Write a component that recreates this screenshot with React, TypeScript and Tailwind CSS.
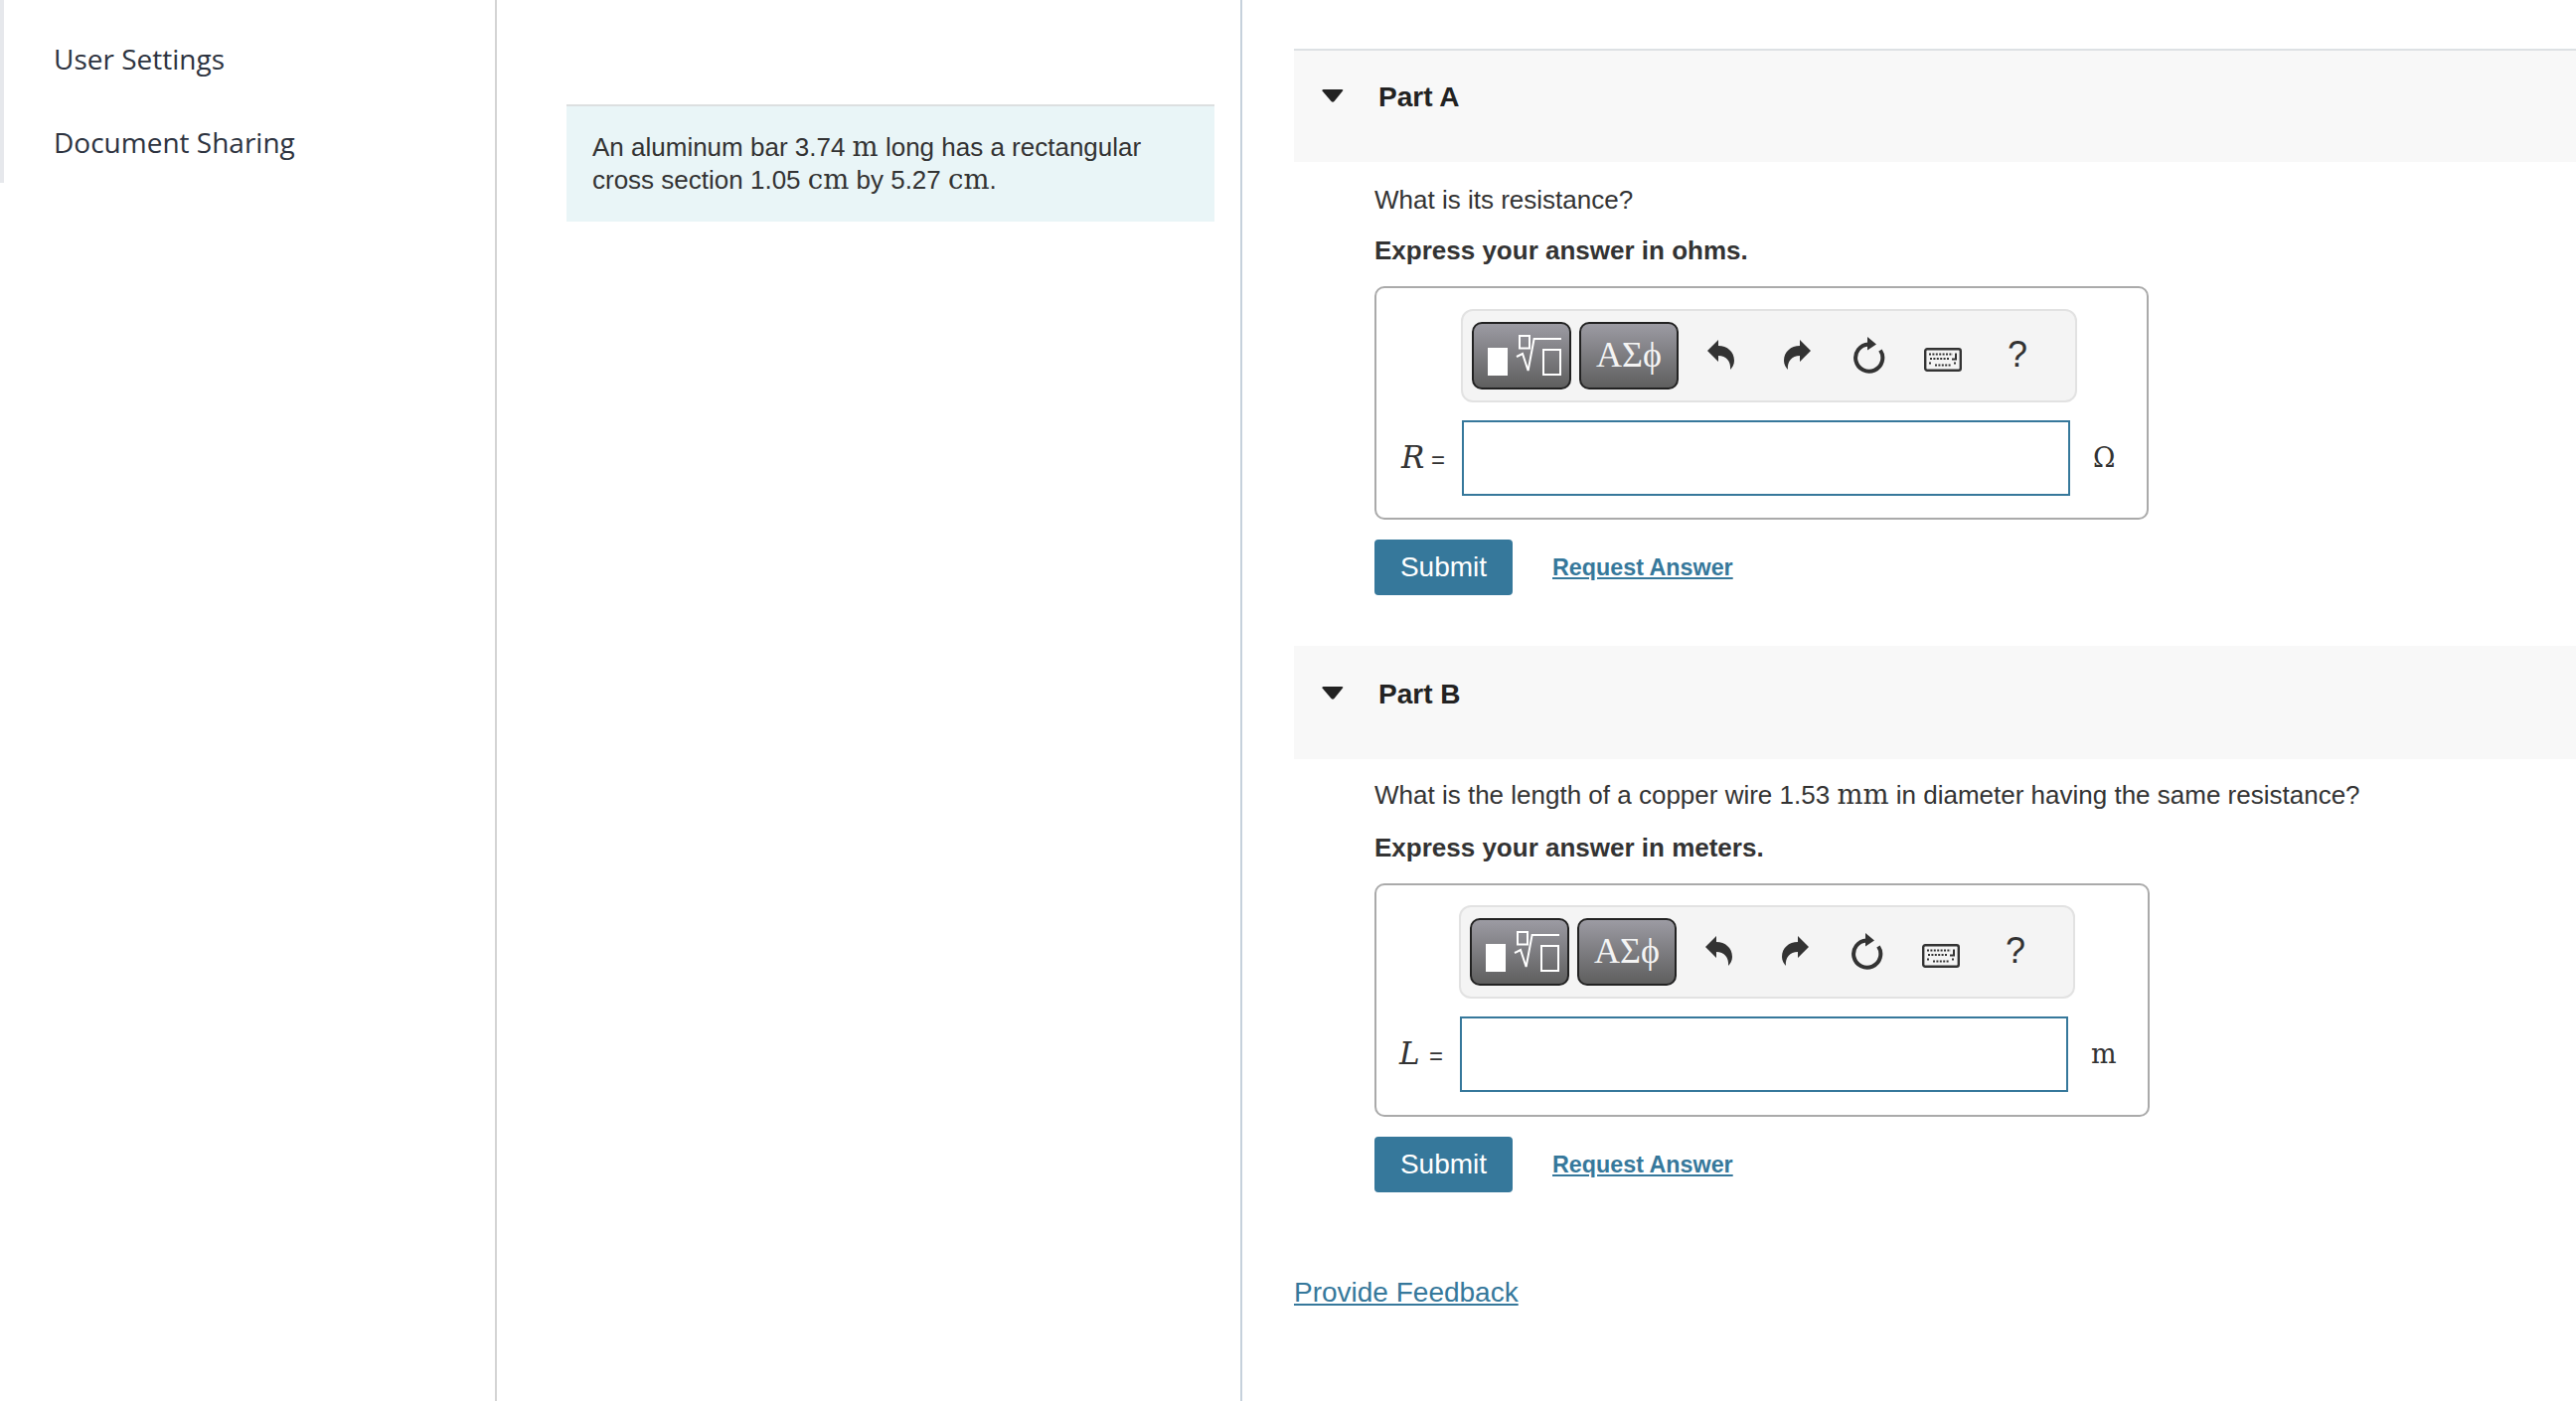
import React from 'react';

const serif = "font-['Liberation_Serif',serif]";

const Tex: React.FC<{ children: React.ReactNode }> = ({ children }) => (
  <span className="font-['DejaVu_Serif',serif] text-[27.5px] leading-none">{children}</span>
);

const TemplatesIcon = () => (
  <svg width="96" height="64" viewBox="0 0 96 64" fill="none" className="block">
    <rect x="14" y="24" width="20" height="28" fill="#fff" />
    <rect x="46" y="12" width="10" height="12.5" stroke="#fff" strokeWidth="2" />
    <path d="M43 33l6-3 5.6 17L60.6 15H88" stroke="#fff" strokeWidth="2" />
    <rect x="70" y="26" width="17" height="25" stroke="#fff" strokeWidth="2" />
  </svg>
);

const UndoIcon = () => (
  <svg width="27" height="30" viewBox="0 0 27 30" fill="#333" className="block">
    <path d="M0 11L11 0v6c9 0 16 6 16 15 0 4-2 7-4 9 1-8-4-14-12-14v6z" />
  </svg>
);

const RedoIcon = () => (
  <svg width="27" height="30" viewBox="0 0 27 30" fill="#333" className="block">
    <path d="M27 11L16 0v6C7 6 0 12 0 21c0 4 2 7 4 9-1-8 4-14 12-14v6z" />
  </svg>
);

const ResetIcon = () => (
  <svg width="32" height="37" viewBox="0 0 32 37" fill="none" className="block">
    <path d="M15 7.5A13.6 13.6 0 1 0 27 13.5" stroke="#333" strokeWidth="4" />
    <path d="M14 0l9 7.5-9 6z" fill="#333" />
  </svg>
);

const KeyboardIcon = () => (
  <svg width="38" height="24" viewBox="0 0 38 24" fill="none" className="block">
    <rect x="1.2" y="1.2" width="35.6" height="21.6" rx="2" stroke="#333" strokeWidth="2.4" />
    <path d="M5 6.5h24M6 11h20M5 15.5h3M11 17.5h16M30 15.5h3" stroke="#333" strokeWidth="2" strokeDasharray="2 1.4" />
    <path d="M32 5.5v6h-4" stroke="#333" strokeWidth="2" />
  </svg>
);

const Toolbar: React.FC<{ className: string }> = ({ className }) => (
  <div className={`flex h-[94px] w-[620px] items-center rounded-[12px] border-2 border-[#e2e2e2] bg-[#f4f4f4] pl-[9px] ${className}`}>
    <button className="flex h-[68px] w-[100px] items-center justify-center rounded-[10px] border-2 border-[#222] bg-gradient-to-b from-[#9c9ba3] to-[#5f5f5f]">
      <TemplatesIcon />
    </button>
    <button className={`ml-2 flex h-[68px] w-[100px] items-center justify-center rounded-[10px] border-2 border-[#222] bg-gradient-to-b from-[#9c9ba3] to-[#5f5f5f] pb-[3px] text-[36px] leading-none text-[#f4f4f4] ${serif}`}>
      ΑΣϕ
    </button>
    <span className="ml-[29px] mt-[-2px]"><UndoIcon /></span>
    <span className="ml-[50px] mt-[-2px]"><RedoIcon /></span>
    <span className="ml-[43px] mt-[-2px]"><ResetIcon /></span>
    <span className="ml-[39px] mt-[8px]"><KeyboardIcon /></span>
    <span className="ml-[46px] mt-[-3px] font-['Liberation_Sans',sans-serif] text-[36px] leading-none text-[#333]">?</span>
  </div>
);

interface PartProps {
  title: string;
  question: React.ReactNode;
  hint: string;
  symbol: string;
  unit: string;
  top?: boolean;
  toolbarShift: string;
  inputShift: string;
  boxWidth: string;
}

const Part: React.FC<PartProps> = ({ title, question, hint, symbol, unit, top, toolbarShift, inputShift, boxWidth }) => (
  <section>
    <div className={`flex h-[114px] bg-[#f8f8f8] pl-[28px] ${top ? 'border-t-2 border-[#dde1e4] pt-[37px]' : 'pt-[39px]'}`}>
      <svg width="22" height="13" viewBox="0 0 22 13" className="mt-[2px] block">
        <path d="M0.5 1.5Q0 0 2 0H20Q22 0 21 1.5L12.5 12Q11 13.5 9.5 12Z" fill="#222" />
      </svg>
      <h2 className="ml-[35px] text-[28px] font-bold leading-[20px] text-[#222]">{title}</h2>
    </div>
    <div className="pl-[81px]">
      <p className={`h-[33px] text-[26px] leading-[33px] text-[#333] ${top ? 'mt-[22px]' : 'mt-[20px]'}`}>{question}</p>
      <p className={`h-[33px] text-[26px] font-bold leading-[33px] text-[#333] ${top ? 'mt-[18px]' : 'mt-[20px]'}`}>{hint}</p>
      <div className={`mt-[19px] h-[235px] rounded-[10px] border-2 border-[#aaa] ${boxWidth}`}>
        <Toolbar className={toolbarShift} />
        <div className={`mt-[18px] flex items-center ${inputShift}`}>
          <div className="relative w-[612px]">
            <span className="absolute right-full mr-[17px] top-[17px] flex items-baseline whitespace-nowrap text-[#333]">
              <i className="w-[30px] font-['DejaVu_Serif',serif] text-[31px] leading-[40px]">{symbol}</i>
              <span className="text-[24px]">=</span>
            </span>
            <input className="block h-[76px] w-full border-2 border-[#36789b] bg-white outline-none" aria-label={symbol} />
          </div>
          <span className="ml-[23px] font-['DejaVu_Serif',serif] text-[27px] text-[#333]">{unit}</span>
        </div>
      </div>
      <div className="mt-[20px] flex items-center">
        <button className="h-[56px] w-[139px] rounded-[4px] bg-[#36789b] text-[28px] text-white">Submit</button>
        <a className="ml-[40px] text-[23.3px] font-bold text-[#36789b] underline">Request Answer</a>
      </div>
    </div>
  </section>
);

export default function App() {
  return (
    <div className="flex h-[1410px] overflow-hidden bg-white font-['Liberation_Sans',Arial,sans-serif]">
      <aside className="w-[500px] shrink-0 border-r-2 border-[#d4d4d4] font-['Open_Sans',sans-serif] text-[28px] text-[#2d3340]">
        <nav className="h-[184px] border-l-4 border-[#e6e8ec] pl-[50px] pt-[17px]">
          <a className="block h-[84px] leading-[84px]">User Settings</a>
          <a className="block h-[84px] leading-[84px]">Document Sharing</a>
        </nav>
      </aside>

      <main className="w-[750px] shrink-0 border-r-2 border-[#c6d1dc] pl-[70px] pr-[26px] pt-[105px]">
        <div className="h-[118px] border-t-2 border-[#dcdfe0] bg-[#e9f5f7] pl-[26px] pt-[25px] text-[26px] leading-[33px] text-[#333]">
          An aluminum bar 3.74&nbsp;<Tex>m</Tex> long has a rectangular
          <br />
          cross section 1.05&nbsp;<Tex>cm</Tex> by 5.27&nbsp;<Tex>cm</Tex>.
        </div>
      </main>

      <div className="min-w-0 flex-1 pl-[52px] pt-[49px]">
        <Part
          top
          title="Part A"
          question="What is its resistance?"
          hint="Express your answer in ohms."
          symbol="R"
          unit="Ω"
          toolbarShift="mt-[21px] ml-[85px]"
          inputShift="ml-[86px]"
          boxWidth="w-[779px]"
        />
        <div className="mt-[51px]">
          <Part
            title="Part B"
            question={
              <>
                What is the length of a copper wire 1.53&nbsp;<Tex>mm</Tex> in diameter having the same resistance?
              </>
            }
            hint="Express your answer in meters."
            symbol="L"
            unit="m"
            toolbarShift="mt-[20px] ml-[83px]"
            inputShift="ml-[84px]"
            boxWidth="w-[780px]"
          />
        </div>
        <a className="mt-[84px] inline-block text-[28px] leading-[34px] text-[#36789b] underline">Provide Feedback</a>
      </div>
    </div>
  );
}
